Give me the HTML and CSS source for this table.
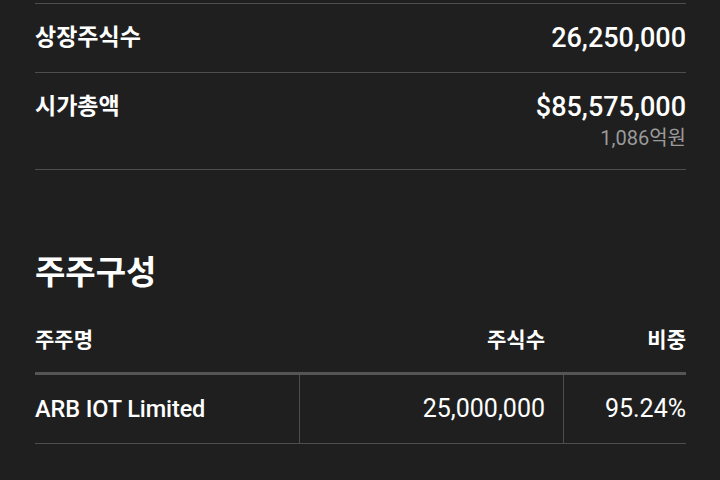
FILE: index.html
```html
<!DOCTYPE html>
<html lang="ko">
<head>
<meta charset="utf-8">
<link rel="stylesheet" href="styles.css">
</head>
<body>
<main class="page">
  <section class="info-list">
    <div class="info-row">
      <div class="info-label">상장주식수</div>
      <div class="info-value">
        <div class="value-main">26,250,000</div>
      </div>
    </div>
    <div class="info-row">
      <div class="info-label">시가총액</div>
      <div class="info-value">
        <div class="value-main">$85,575,000</div>
        <div class="value-sub">1,086억원</div>
      </div>
    </div>
  </section>

  <section class="holders">
    <h2 class="section-title">주주구성</h2>
    <div class="holder-table">
      <div class="th th-name">주주명</div>
      <div class="th th-num">주식수</div>
      <div class="th th-pct">비중</div>
      <div class="td td-name">ARB IOT Limited</div>
      <div class="td td-num">25,000,000</div>
      <div class="td td-pct">95.24%</div>
    </div>
  </section>
</main>
</body>
</html>
```

FILE: styles.css
```css
html, body {
  margin: 0;
  padding: 0;
  background: #1f1f1f;
}

body {
  font-family: Roboto, "Noto Sans CJK KR", sans-serif;
  color: #ffffff;
}

.page {
  padding: 3px 34px 0 35px;
}

.info-list {
  display: flex;
  flex-direction: column;
}

.info-row {
  display: flex;
  justify-content: space-between;
  align-items: flex-start;
  border-top: 1px solid #4d4d4d;
  padding: 19px 0;
}

.info-row:last-child {
  border-bottom: 1px solid #4d4d4d;
  padding-bottom: 20px;
}

.info-label {
  font-size: 23px;
  font-weight: 700;
  line-height: 30px;
}

.info-value {
  text-align: right;
}

.value-main {
  font-size: 27px;
  font-weight: 500;
  line-height: 30px;
}

.value-sub {
  margin-top: 5px;
  font-size: 20px;
  line-height: 22px;
  color: #9a9a9a;
}

.holders {
  margin-top: 83px;
}

.section-title {
  margin: 0;
  font-size: 33px;
  font-weight: 700;
  line-height: 40px;
}

.holder-table {
  margin-top: 35px;
  display: grid;
  grid-template-columns: 264px 264px 1fr;
}

.th {
  font-size: 21px;
  font-weight: 700;
  line-height: 24px;
  padding-bottom: 20px;
  border-bottom: 3px solid #555555;
}

.td {
  font-size: 25px;
  line-height: 30px;
  padding: 19px 0;
  border-bottom: 1px solid #4d4d4d;
}

.th-num, .td-num {
  text-align: right;
  padding-right: 18px;
}

.th-pct, .td-pct {
  text-align: right;
}

.td-name {
  font-weight: 500;
  font-size: 23.5px;
  letter-spacing: -0.1px;
}

.td-num, .td-pct {
  border-left: 1px solid #4d4d4d;
}
```
